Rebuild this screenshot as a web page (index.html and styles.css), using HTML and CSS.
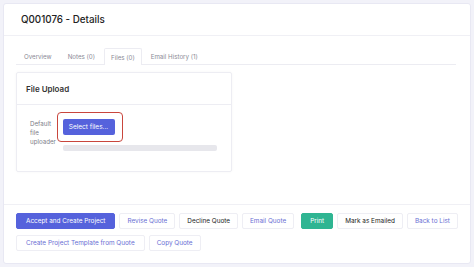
FILE: index.html
```html
<!DOCTYPE html>
<html lang="en">
<head>
    <meta charset="UTF-8">
    <meta name="viewport" content="width=device-width, initial-scale=1.0">
    <title>Q001076 - Details</title>
    <link rel="stylesheet" href="styles.css">
</head>
<body>
    <main class="card">
        <header class="card-header">
            <h1>Q001076 - Details</h1>
        </header>

        <section class="card-body">
            <nav class="tabs">
                <a class="tab">Overview</a>
                <a class="tab">Notes (0)</a>
                <a class="tab active">Files (0)</a>
                <a class="tab">Email History (1)</a>
            </nav>

            <article class="upload">
                <h2 class="upload-title">File Upload</h2>
                <div class="upload-body">
                    <label class="upload-label">Default file uploader</label>
                    <div class="upload-field">
                        <div class="highlight">
                            <button class="btn-select">Select files...</button>
                        </div>
                        <div class="progress"></div>
                    </div>
                </div>
            </article>
        </section>

        <footer class="card-footer">
            <button class="btn primary">Accept and Create Project</button>
            <button class="btn link">Revise Quote</button>
            <button class="btn">Decline Quote</button>
            <button class="btn link">Email Quote</button>
            <button class="btn success">Print</button>
            <button class="btn">Mark as Emailed</button>
            <button class="btn link">Back to List</button>
            <button class="btn link wide">Create Project Template from Quote</button>
            <button class="btn link">Copy Quote</button>
        </footer>
    </main>
</body>
</html>
```

FILE: styles.css
```css
html{
    box-sizing: border-box;
    font-family: Inter, "Open Sans", sans-serif;
}

*,
*::after,
*::before{
    box-sizing: border-box;
}

body{
    margin: 0;
    padding: 3px;
    background-color: #f2f2f9;
}

.card{
    background-color: #fff;
    border: 1px solid #e8e8f3;
    border-radius: 3px;
    height: 261px;
}

.card-header{
    height: 32px;
    padding: 0 17px;
    display: flex;
    align-items: center;
    border-bottom: 1px solid #f0f0f5;
}
.card-header h1{
    margin: 0;
    font-size: 9.8px;
    font-weight: 500;
    color: #222;
}

.card-body{
    padding: 12px 14px 32px 12px;
}

.tabs{
    display: flex;
    border-bottom: 1px solid #ececf2;
    height: 17px;
}
.tab{
    padding: 0 7px;
    font-size: 6.2px;
    color: #8a8a96;
    display: flex;
    align-items: center;
    border: 1px solid transparent;
    border-bottom: none;
    border-radius: 2px 2px 0 0;
}
.tab.active{
    padding: 0 6px;
    margin: 0 1px;
    border-color: #ececf2;
    background-color: #fff;
    margin-bottom: -1px;
}

.upload{
    margin-top: 7px;
    width: 216px;
    height: 100px;
    border: 1px solid #ededf3;
    border-radius: 2px;
    box-shadow: 0 0 3px rgba(0,0,0,.04);
}
.upload-title{
    margin: 0;
    height: 32px;
    padding: 0 9px;
    display: flex;
    align-items: center;
    font-size: 8px;
    font-weight: 600;
    color: #333;
    border-bottom: 1px solid #ededf3;
}
.upload-body{
    display: flex;
    padding: 7px 0 0 13px;
}
.upload-label{
    width: 32px;
    padding: 7px 6px 0 0;
    font-size: 6.2px;
    line-height: 9px;
    color: #7d7d88;
}
.upload-field{
    display: flex;
    flex-direction: column;
}
.highlight{
    margin-left: -5px;
    width: 66px;
    height: 30px;
    border: 1.5px solid #c9463d;
    border-radius: 4px;
    display: flex;
    align-items: center;
    padding-left: 4.5px;
}
.btn-select{
    width: 52px;
    height: 16px;
    border: none;
    border-radius: 2px;
    background-color: #5562dc;
    color: #fff;
    font-family: inherit;
    font-size: 6.5px;
    padding: 0;
}
.progress{
    margin: 3px 0 0 1px;
    width: 154px;
    height: 6px;
    border-radius: 2px;
    background-color: #e7e7ec;
}

.card-footer{
    border-top: 1px solid #f0f0f5;
    padding: 8px 10px 0 12px;
    display: flex;
    flex-wrap: wrap;
    gap: 6px 4px;
}

.btn{
    height: 16px;
    padding: 0 7px;
    border: 1px solid #eeeef4;
    border-radius: 2px;
    background-color: #fff;
    color: #222;
    font-family: inherit;
    font-size: 6.4px;
}
.btn.link{
    color: #6a6fd4;
}
.btn.wide{
    padding: 0 9px;
}
.btn.primary{
    padding: 0 9px;
    background-color: #5562dc;
    border-color: #5562dc;
    color: #fff;
}
.btn.success{
    padding: 0 8px;
    margin-left: 3px;
    background-color: #2fb592;
    border-color: #2fb592;
    color: #fff;
}
```
